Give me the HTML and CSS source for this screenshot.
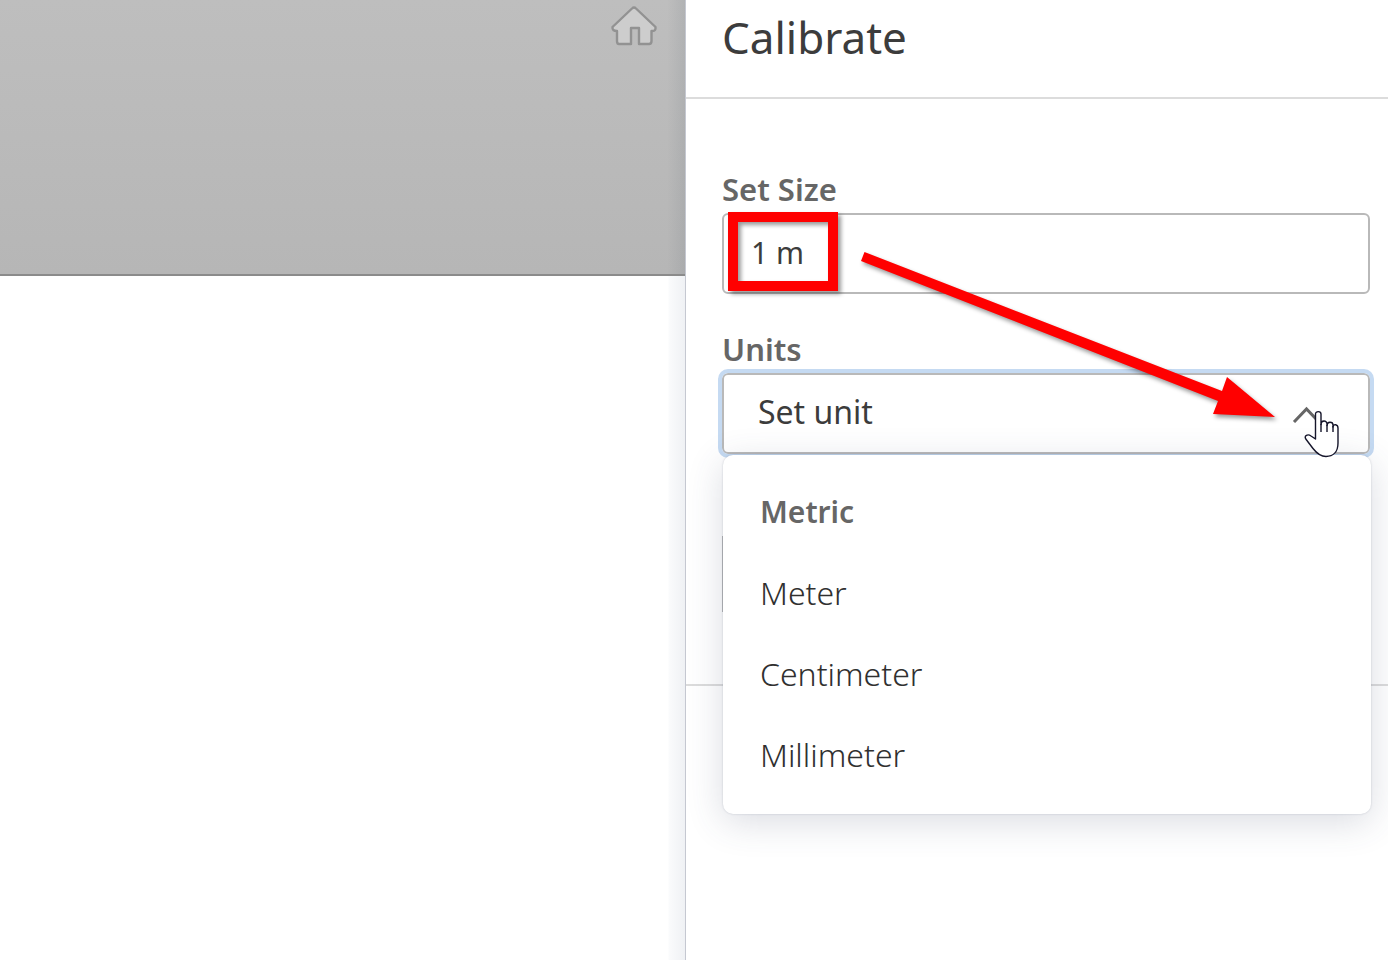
FILE: index.html
```html
<!DOCTYPE html>
<html lang="en">
<head>
<meta charset="utf-8">
<title>Calibrate</title>
<link rel="stylesheet" href="styles.css">
</head>
<body>
<div class="app">
  <main class="viewer">
    <div class="canvas">
      <button class="home" type="button" aria-label="Home">
        <svg width="48" height="42" viewBox="0 0 48 42" fill="#cdcdcd" stroke="#929292" stroke-width="2.400" stroke-linejoin="round">
          <path d="M24 2.500Q25 2.500 26 3.500L45.500 22Q46 26 42.500 26H41.500V36Q41.500 39 39 39H29V23H21V39H9Q7 39 7 36V26Q2 26 2.500 22L22 3.500Q23 2.500 24 2.500Z"/>
        </svg>
      </button>
    </div>
  </main>
  <aside class="panel">
    <header class="panel-header"><h1 class="title">Calibrate</h1></header>
    <form class="form">
      <div class="field">
        <label class="label" for="size">Set Size</label>
        <input class="control size-input" id="size" type="text" value="1 m">
        <span class="highlight"></span>
        <svg class="arrow" width="430" height="180" viewBox="0 0 430 180" fill="red" aria-hidden="true">
          <path d="M3 11L6.500 2L364 141L369 127L417 167L355 164L360 151Z"/>
        </svg>
      </div>
      <div class="field units">
        <label class="label" for="units">Units</label>
        <select class="control unit-select" id="units"><option>Set unit</option></select>
        <svg class="chevron" width="30" height="20" viewBox="0 0 30 20" fill="none" stroke="#666" stroke-width="3" aria-hidden="true"><path d="M2 19L14.500 6L27 19"/></svg>
        <ul class="menu">
          <li class="group">Metric</li>
          <li><button class="option" type="button">Meter</button></li>
          <li><button class="option" type="button">Centimeter</button></li>
          <li><button class="option" type="button">Millimeter</button></li>
        </ul>
        <svg class="pointer" width="36" height="48" viewBox="0 0 36 48" fill="#fff" stroke="#15152a" stroke-width="1.400" stroke-linejoin="round" aria-hidden="true">
          <path d="M11.500 29V4C11.500 .8 17 .8 17 4V14.500C17 10 23 10 23 14V15.500C23 11 29 11.500 29 15V17C29 13.500 34 14 34 18V33C34 42 29 46.500 22 46.500C16 46.500 12.500 43 9 38.500L1.800 29C0 26 3.500 23.500 7 26Z"/>
          <path d="M17 14V22M23 15V22M29 16V22" fill="none"/>
        </svg>
      </div>
      <div class="placeholder"></div>
    </form>
    <section class="details"></section>
  </aside>
</div>
</body>
</html>
```
FILE: styles.css
```css
* { box-sizing: border-box; }
body { margin: 0; background: #fff; color: #3c3c3c; font-family: "Noto Sans", sans-serif; font-size: 30px; }
.app { display: grid; grid-template-columns: 685fr 703fr; min-height: 100vh; overflow: hidden; }
.viewer { min-width: 0; background: linear-gradient(to left, #eff1f4, #fafbfc 16px, #fff 17px); }
.canvas { display: flex; justify-content: flex-end; align-items: flex-start; height: 276px; padding: 5px 27px 0 0; border-bottom: 2px solid #8b8b8b; background: linear-gradient(to left, #32415018, #32415000 18px), linear-gradient(#bebebe, #b6b6b6); }
.home { display: flex; padding: 0; border: 0; background: none; }
.panel { min-width: 0; border-left: 1px solid #c5c8d1; background: #fff; }
.panel-header { height: 99px; padding: 7px 36px; border-bottom: 2px solid #dcdcdc; }
.title { margin: 0; font-size: 44px; line-height: 60px; font-weight: 400; }
.form { display: flex; flex-direction: column; gap: 35px; padding: 70px 18px 0 36px; }
.field { position: relative; display: flex; flex-direction: column; }
.label { height: 44px; line-height: 40px; font-size: 31px; font-weight: 600; color: #666; }
.control { width: 100%; height: 81px; border: 2px solid #b9b9b9; border-radius: 6px; background: #fff; color: #3c3c3c; font: 400 30px "Noto Sans", sans-serif; }
.size-input { padding: 0 27px 2px; outline: 0; }
.highlight { position: absolute; top: 43px; left: 6px; width: 110px; height: 79px; border: 10px solid red; filter: drop-shadow(3px 3px 2px #0006); pointer-events: none; }
.arrow { position: absolute; top: 81px; left: 136px; z-index: 3; filter: drop-shadow(2px 3px 2px #0006); pointer-events: none; }
.unit-select { padding: 0 34px 4px; appearance: none; outline: 4px solid #c5daf2; font-size: 32px; }
.chevron { position: absolute; right: 48px; top: 74px; pointer-events: none; }
.menu { position: absolute; top: 126px; left: 1px; right: -1px; z-index: 2; margin: 0; padding: 17px 0 18px; border-radius: 10px; background: #fff; list-style: none; box-shadow: 0 0 2px #3c466440, 0 8px 36px #3c466430; }
.group { height: 81px; padding: 0 37px; line-height: 80px; font-weight: 600; color: #666; }
.option { display: block; width: 100%; height: 81px; padding: 0 37px 2px; border: 0; background: none; color: #303030; font: 300 32px "Noto Sans", sans-serif; text-align: left; }
.pointer { position: absolute; top: 81px; right: 30px; z-index: 4; pointer-events: none; }
.placeholder { height: 76px; margin-top: 47px; border: 1px solid #b9b9b9; }
.details { margin-top: 72px; border-top: 2px solid #dcdcdc; }
```
